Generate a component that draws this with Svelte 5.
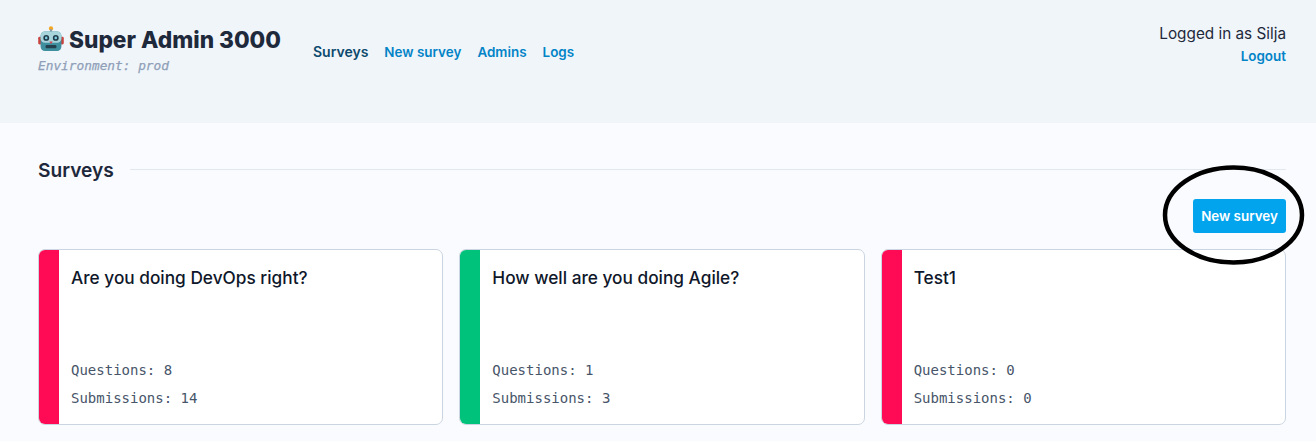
<script>
  const surveys = [
    { title: 'Are you doing DevOps right?', questions: 8, submissions: 14, active: false },
    { title: 'How well are you doing Agile?', questions: 1, submissions: 3, active: true },
    { title: 'Test1', questions: 0, submissions: 0, active: false }
  ];
</script>

<div class="page">
  <header class="top">
    <div class="brand">
      <h1 class="title">
        <svg class="robot" viewBox="0 0 24 24" width="26" height="26" aria-hidden="true">
          <circle cx="12" cy="2.2" r="2" fill="#f5a623" />
          <rect x="11" y="3" width="2" height="3" fill="#8a9aa5" />
          <rect x="0.2" y="10" width="3.2" height="7" rx="1.2" fill="#c8443f" />
          <rect x="20.6" y="10" width="3.2" height="7" rx="1.2" fill="#c8443f" />
          <rect x="2.4" y="5" width="19.2" height="18" rx="4" fill="#3f8f9f" />
          <rect x="2.4" y="5" width="19.2" height="10.5" rx="4" fill="#a8d4dc" />
          <circle cx="7.6" cy="11" r="2.7" fill="#1f3a48" />
          <circle cx="16.4" cy="11" r="2.7" fill="#1f3a48" />
          <circle cx="7.6" cy="11" r="1.2" fill="#7fd0e6" />
          <circle cx="16.4" cy="11" r="1.2" fill="#7fd0e6" />
          <path d="M10.4 14.4 h3.2 l-1.6 2.2 z" fill="#d8434a" />
          <rect x="7" y="17.6" width="10" height="3" rx="1" fill="#24404e" />
        </svg>
        <span>Super Admin 3000</span>
      </h1>
      <p class="env">Environment: prod</p>
    </div>
    <nav class="nav">
      <a href="#s" class="current">Surveys</a>
      <a href="#n">New survey</a>
      <a href="#a">Admins</a>
      <a href="#l">Logs</a>
    </nav>
    <div class="user">
      <div class="logged">Logged in as Silja</div>
      <a href="#o" class="logout">Logout</a>
    </div>
  </header>

  <main class="content">
    <div class="heading">
      <h2>Surveys</h2>
      <span class="rule"></span>
    </div>
    <div class="actions">
      <button class="new">New survey</button>
      <svg class="ring" width="146" height="104" viewBox="0 0 146 104" aria-hidden="true">
        <ellipse cx="73.5" cy="52" rx="68.5" ry="47.5" fill="none" stroke="#000" stroke-width="4.5" />
      </svg>
    </div>
    <div class="grid">
      {#each surveys as s}
        <article class="card">
          <div class="bar" class:on={s.active}></div>
          <div class="body">
            <h3>{s.title}</h3>
            <div class="stats">
              <div>Questions: {s.questions}</div>
              <div>Submissions: {s.submissions}</div>
            </div>
          </div>
        </article>
      {/each}
    </div>
  </main>
</div>

<style>
  :global(body) {
    margin: 0;
    background: #fafbfe;
    font-family: Inter, "Liberation Sans", sans-serif;
    color: #1e293b;
  }
  .top {
    display: flex;
    align-items: flex-start;
    height: 123px;
    box-sizing: border-box;
    padding: 22px 30px 0 38px;
    background: #f0f5fa;
  }
  .title {
    display: flex;
    align-items: center;
    gap: 5px;
    margin: 0;
    font-size: 22.7px;
    line-height: 34px;
    font-weight: 800;
    color: #1e293b;
  }
  .title span { position: relative; top: 1px; }
  .robot { flex: none; }
  .env {
    margin: 2px 0 0;
    font-family: "DejaVu Sans Mono", "Liberation Mono", monospace;
    font-style: italic;
    font-size: 12.8px;
    line-height: 16px;
    color: #8f9fb8;
    -webkit-text-stroke: 0.25px #8f9fb8;
  }
  .nav {
    display: flex;
    gap: 16px;
    margin-left: 32px;
    line-height: 60px;
    height: 60px;
  }
  .nav a, .logout {
    font-size: 13.45px;
    font-weight: 600;
    color: #0284c7;
    text-decoration: none;
  }
  .nav a.current { color: #0c4a6e; font-size: 14px; font-weight: 600; }
  .user {
    margin-left: auto;
    text-align: right;
    padding-top: 2px;
  }
  .logged { font-size: 15.3px; line-height: 20px; color: #1e293b; }
  .logout { display: block; line-height: 20px; margin-top: 2px; }
  .content { padding: 32px 30px 16px 38px; }
  .heading {
    display: flex;
    align-items: center;
    gap: 16px;
    height: 28px;
  }
  .heading h2 {
    margin: 2px 0 0;
    font-size: 19.2px;
    font-weight: 600;
    color: #1e293b;
  }
  .rule { flex: 1; height: 1px; background: #e2e8f0; }
  .actions {
    position: relative;
    display: flex;
    justify-content: flex-end;
    margin-top: 16px;
  }
  .new {
    height: 34px;
    width: 93px;
    padding: 0;
    border: 0;
    border-radius: 3px;
    background: #03a4ee;
    color: #fff;
    font: 600 13.4px Inter, sans-serif;
  }
  .ring {
    position: absolute;
    right: -20px;
    top: -36px;
  }
  .grid {
    display: grid;
    grid-template-columns: repeat(3, 1fr);
    gap: 16px;
    margin-top: 16px;
  }
  .card {
    display: flex;
    height: 176px;
    box-sizing: border-box;
    border: 1px solid #cbd5e1;
    border-radius: 7px;
    background: #fff;
    overflow: hidden;
  }
  .bar { width: 20px; flex: none; background: #ff0a54; }
  .bar.on { background: #00c27a; }
  .body {
    flex: 1;
    display: flex;
    flex-direction: column;
    justify-content: space-between;
    padding: 16px 12px 12px;
  }
  .body h3 {
    margin: 0;
    font-size: 17.25px;
    font-weight: 500;
    line-height: 24px;
    color: #0f172a;
  }
  .stats {
    font-family: "DejaVu Sans Mono", "Liberation Mono", monospace;
    font-size: 14px;
    line-height: 28px;
    color: #475569;
  }
</style>
